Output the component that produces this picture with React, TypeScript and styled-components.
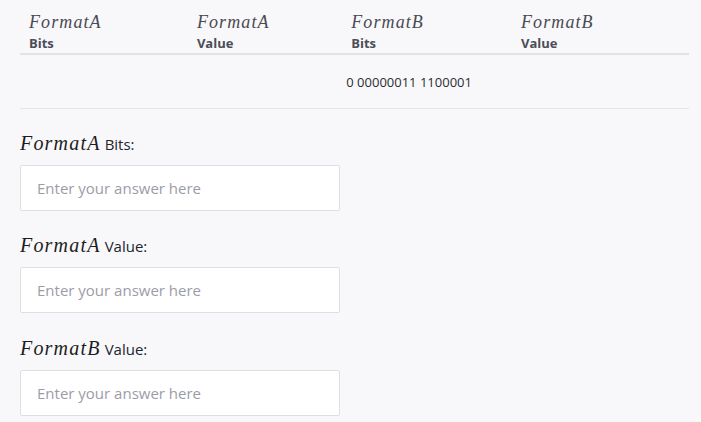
import React from 'react'
import styled, { createGlobalStyle } from 'styled-components'

const GlobalStyle = createGlobalStyle`
  html, body {
    margin: 0;
    padding: 0;
    background: #f8f8fa;
  }
  body {
    font-family: "Open Sans", sans-serif;
  }
`

const Page = styled.div`
  padding: 7px 12px 0 20px;
`

const Table = styled.table`
  width: 669px;
  border-collapse: collapse;
`

const HeadCell = styled.th<{ $w: number }>`
  text-align: left;
  font-weight: 400;
  padding: 4px 0 2px 9px;
  border-bottom: 2px solid #e1e2e7;
  vertical-align: bottom;
  width: ${(p) => p.$w}px;
`

const HeadSub = styled.div`
  margin-top: 3px;
  font-family: "Open Sans", sans-serif;
  font-weight: 700;
  font-size: 13px;
  line-height: 15px;
  color: #4b4d57;
`

const Math = styled.span<{ $big?: boolean }>`
  font-family: "Liberation Serif", serif;
  font-style: italic;
  font-weight: 400;
  font-size: ${(p) => (p.$big ? '20px' : '18px')};
  letter-spacing: ${(p) => (p.$big ? '1.2px' : '1.1px')};
  line-height: 20px;
  color: ${(p) => (p.$big ? '#1c1c22' : '#4a4a52')};
`

const BodyCell = styled.td`
  padding: 0 0 0 4px;
  height: 53px;
  font-family: "Open Sans", sans-serif;
  font-size: 13px;
  color: #2a2b33;
  border-bottom: 1px solid #e3e4e9;
`

const Field = styled.div`
  margin-top: 24px;
  &:last-child {
    margin-top: 25px;
  }
`

const Label = styled.label`
  display: flex;
  align-items: baseline;
  gap: 4px;
  height: 24px;
  margin-bottom: 8px;
  font-family: "Open Sans", sans-serif;
  font-size: 15px;
  color: #23242c;
`

const Input = styled.input`
  box-sizing: border-box;
  display: block;
  width: 320px;
  height: 46px;
  padding: 0 16px;
  border: 1px solid #dedfe5;
  border-radius: 2px;
  background: #fff;
  font-family: "Open Sans", sans-serif;
  font-size: 15px;
  color: #2a2b33;
  outline: none;
  &::placeholder {
    color: #9c9ca8;
  }
`

const fields = [
  { sym: 'FormatA', text: 'Bits:' },
  { sym: 'FormatA', text: 'Value:' },
  { sym: 'FormatB', text: 'Value:' },
]

const heads = [
  { sym: 'FormatA', sub: 'Bits', w: 168 },
  { sym: 'FormatA', sub: 'Value', w: 153 },
  { sym: 'FormatB', sub: 'Bits', w: 170 },
  { sym: 'FormatB', sub: 'Value', w: 178 },
]

export default function App() {
  return (
    <>
      <GlobalStyle />
      <Page>
        <Table>
          <thead>
            <tr>
              {heads.map((h, i) => (
                <HeadCell key={i} $w={h.w}>
                  <Math>{h.sym}</Math>
                  <HeadSub>{h.sub}</HeadSub>
                </HeadCell>
              ))}
            </tr>
          </thead>
          <tbody>
            <tr>
              <BodyCell />
              <BodyCell />
              <BodyCell>0 00000011 1100001</BodyCell>
              <BodyCell />
            </tr>
          </tbody>
        </Table>
        {fields.map((f, i) => (
          <Field key={i}>
            <Label>
              <Math $big>{f.sym}</Math>
              {f.text}
            </Label>
            <Input placeholder="Enter your answer here" />
          </Field>
        ))}
      </Page>
    </>
  )
}
